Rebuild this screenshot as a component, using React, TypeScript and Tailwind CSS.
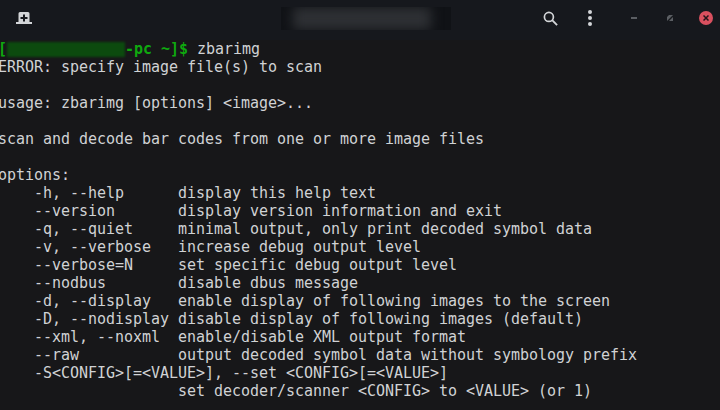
const LINES = [
  "ERROR: specify image file(s) to scan",
  "",
  "usage: zbarimg [options] <image>...",
  "",
  "scan and decode bar codes from one or more image files",
  "",
  "options:",
  "    -h, --help      display this help text",
  "    --version       display version information and exit",
  "    -q, --quiet     minimal output, only print decoded symbol data",
  "    -v, --verbose   increase debug output level",
  "    --verbose=N     set specific debug output level",
  "    --nodbus        disable dbus message",
  "    -d, --display   enable display of following images to the screen",
  "    -D, --nodisplay disable display of following images (default)",
  "    --xml, --noxml  enable/disable XML output format",
  "    --raw           output decoded symbol data without symbology prefix",
  "    -S<CONFIG>[=<VALUE>], --set <CONFIG>[=<VALUE>]",
  "                    set decoder/scanner <CONFIG> to <VALUE> (or 1)",
];

function Header() {
  return (
    <div className="flex h-[40px] items-center bg-[#16181d] pb-1">
      {/* new tab */}
      <svg className="ml-4 h-[12px] w-4" viewBox="0 0 16 12">
        <path d="M2.5 1.5 a1.5 1.5 0 0 1 1.5-1.5 h8 a1.5 1.5 0 0 1 1.5 1.5 V10 H16 V12 H0 V10 H2.5 Z" fill="#d3d5d8" />
        <path d="M7 2.5 h2 v2.5 h2.5 v2 H9 V9.5 H7 V7 H4.5 v-2 H7 Z" fill="#16181d" />
      </svg>
      {/* blurred title */}
      <div className="ml-[249px] h-[23px] w-[170px] overflow-hidden bg-[#101216]">
        <div className="ml-3 h-[23px] w-[138px] bg-[#2e3034] blur-[6px]" />
      </div>
      {/* search */}
      <svg className="ml-[92px] h-[15px] w-[15px]" viewBox="0 0 16 16" fill="none" stroke="#d3d5d8">
        <circle cx="6.3" cy="6.3" r="4.8" strokeWidth="1.8" />
        <path d="M9.8 9.8 L15 15" strokeWidth="2" />
      </svg>
      {/* menu dots */}
      <div className="ml-[30px] flex flex-col gap-[2px]">
        <div className="h-1 w-1 rounded-full bg-[#d3d5d8]" />
        <div className="h-1 w-1 rounded-full bg-[#d3d5d8]" />
        <div className="h-1 w-1 rounded-full bg-[#d3d5d8]" />
      </div>
      {/* window controls */}
      <div className="ml-[39px] h-0.5 w-[6px] bg-[#5b5e63]" />
      <svg className="ml-[30px] h-[6px] w-[6px]" viewBox="0 0 6 6">
        <path d="M0 2 L2 0 H6 L0 6 Z" fill="#5b5e63" />
        <path d="M6 2 V6 H2 Z" fill="#5b5e63" />
      </svg>
      <div className="ml-[26px] flex h-[14px] w-[14px] items-center justify-center rounded-full bg-[#d9505f]">
        <svg className="h-[6px] w-[6px]" viewBox="0 0 6 6" stroke="#22151a" strokeWidth="1.5">
          <path d="M0.5 0.5 L5.5 5.5 M5.5 0.5 L0.5 5.5" />
        </svg>
      </div>
    </div>
  );
}

export default function App() {
  return (
    <div className="h-[410px] w-[720px] overflow-hidden bg-[#171719] font-['DejaVu_Sans_Mono',monospace] text-[15px] leading-[18px] tracking-[-0.03px] text-[#d0d2d4]">
      <Header />
      <div className="-ml-[2px] whitespace-pre">
        <div className="flex items-center font-bold text-[#0fa80f]">
          <span>[</span>
          <span className="h-[15px] w-[118px] bg-[#0c4a0e] blur-[1px]" />
          <span>-pc ~]$ </span>
          <span className="font-normal text-[#d0d2d4]">zbarimg</span>
        </div>
        {LINES.map((line, i) => (
          <div key={i} className="h-[18px]">
            {line}
          </div>
        ))}
      </div>
    </div>
  );
}
